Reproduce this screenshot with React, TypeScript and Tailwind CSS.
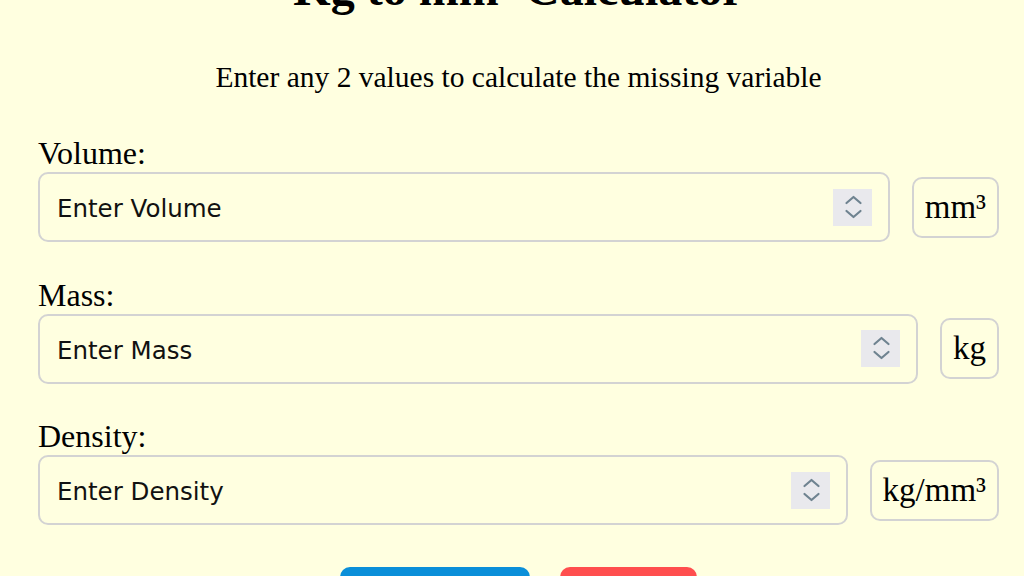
import React from "react";

const fields = [
  { label: "Volume:", placeholder: "Enter Volume", unit: "mm³" },
  { label: "Mass:", placeholder: "Enter Mass", unit: "kg" },
  { label: "Density:", placeholder: "Enter Density", unit: "kg/mm³" },
];

const Spinner = () => (
  <div className="w-[39px] h-[37px] bg-[#e9e9ed] shrink-0">
    <svg width="39" height="37" viewBox="0 0 39 37" fill="none">
      <path d="M13.5 14 L20.5 8 L27.5 14" stroke="#6f8390" strokeWidth="2.2" strokeLinecap="round" strokeLinejoin="round" />
      <path d="M13.5 22 L20.5 28 L27.5 22" stroke="#6f8390" strokeWidth="2.2" strokeLinecap="round" strokeLinejoin="round" />
    </svg>
  </div>
);

export default function App() {
  return (
    <div className="min-h-screen w-full bg-[#ffffe0] overflow-hidden text-black font-['Liberation_Serif','Times_New_Roman',serif]">
      <div className="pl-[38px] pr-[25px] mt-[-38px]">
        <h1 className="text-center text-[48px] leading-[54px] font-bold">Kg to mm³ Calculator</h1>
        <p className="text-center text-[29.5px] leading-[32px] mt-[45px]">
          Enter any 2 values to calculate the missing variable
        </p>

        <div className="mt-[42px] flex flex-col gap-[34.5px]">
          {fields.map((f) => (
            <div key={f.label}>
              <label className="block text-[32px] leading-[37px]">{f.label}</label>
              <div className="flex items-center gap-[22px]">
                <div className="flex-1 h-[70px] flex items-center border-2 border-[#d3d3d3] rounded-[10px] pl-[17px] pr-[16px]">
                  <input
                    type="text"
                    placeholder={f.placeholder}
                    className="flex-1 min-w-0 pt-[5px] bg-transparent outline-none text-[24.5px] font-['DejaVu_Sans',sans-serif] placeholder:text-[#111]"
                  />
                  <Spinner />
                </div>
                <div className="shrink-0 border-2 border-[#d3d3d3] rounded-[10px] px-[11px] py-[10px] text-[33px] leading-[37px]">
                  {f.unit}
                </div>
              </div>
            </div>
          ))}
        </div>

        <div className="mt-[42px] flex justify-center gap-[30px]">
          <button className="w-[190px] h-[56px] rounded-[10px] bg-[#0b8fd9] text-white text-[24px] font-['DejaVu_Sans',sans-serif]">
            Calculate
          </button>
          <button className="w-[137px] h-[56px] rounded-[10px] bg-[#ff4e4e] text-white text-[24px] font-['DejaVu_Sans',sans-serif]">
            Clear
          </button>
        </div>
      </div>
    </div>
  );
}
